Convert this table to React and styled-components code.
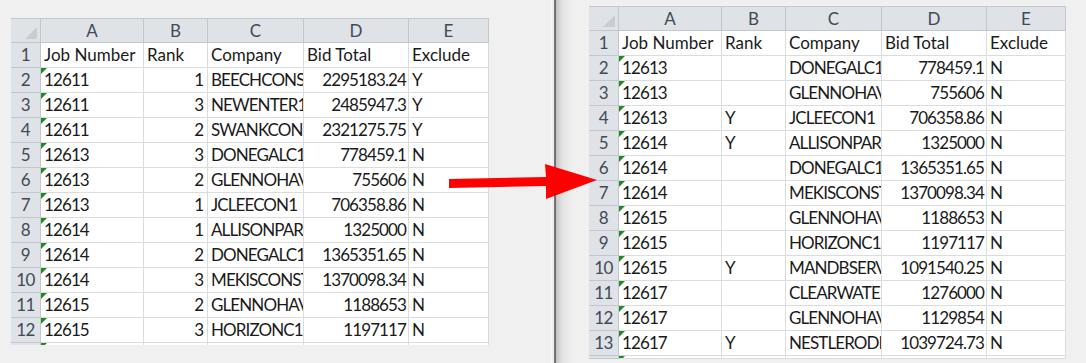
import React from 'react'
import styled, { createGlobalStyle } from 'styled-components'

const GlobalStyle = createGlobalStyle`
  html, body {
    margin: 0;
    padding: 0;
    background: #f0f0f0;
  }
  body {
    width: 1086px;
    height: 363px;
    overflow: hidden;
    font-family: Lato, "Liberation Sans", sans-serif;
  }
`

const LETTERS = ['A', 'B', 'C', 'D', 'E']

const leftRows = [
  ['Job Number', 'Rank', 'Company', 'Bid Total', 'Exclude'],
  ['12611', '1', 'BEECHCONS', '2295183.24', 'Y'],
  ['12611', '3', 'NEWENTER1', '2485947.3', 'Y'],
  ['12611', '2', 'SWANKCON', '2321275.75', 'Y'],
  ['12613', '3', 'DONEGALC1', '778459.1', 'N'],
  ['12613', '2', 'GLENNOHAV', '755606', 'N'],
  ['12613', '1', 'JCLEECON1', '706358.86', 'N'],
  ['12614', '1', 'ALLISONPAR', '1325000', 'N'],
  ['12614', '2', 'DONEGALC1', '1365351.65', 'N'],
  ['12614', '3', 'MEKISCONST', '1370098.34', 'N'],
  ['12615', '2', 'GLENNOHAV', '1188653', 'N'],
  ['12615', '3', 'HORIZONC1', '1197117', 'N'],
]

const rightRows = [
  ['Job Number', 'Rank', 'Company', 'Bid Total', 'Exclude'],
  ['12613', '', 'DONEGALC1', '778459.1', 'N'],
  ['12613', '', 'GLENNOHAV', '755606', 'N'],
  ['12613', 'Y', 'JCLEECON1', '706358.86', 'N'],
  ['12614', 'Y', 'ALLISONPAR', '1325000', 'N'],
  ['12614', '', 'DONEGALC1', '1365351.65', 'N'],
  ['12614', '', 'MEKISCONST', '1370098.34', 'N'],
  ['12615', '', 'GLENNOHAV', '1188653', 'N'],
  ['12615', '', 'HORIZONC1', '1197117', 'N'],
  ['12615', 'Y', 'MANDBSERV', '1091540.25', 'N'],
  ['12617', '', 'CLEARWATE', '1276000', 'N'],
  ['12617', '', 'GLENNOHAV', '1129854', 'N'],
  ['12617', 'Y', 'NESTLERODE', '1039724.73', 'N'],
]

// caps and digits run wider in Lato than in the sheet's font
const isTight = v => /^[A-Z0-9.]{2,}$/.test(v)

function Sheet({ rows, cols, align, tail }) {
  return (
    <Grid $cols={cols} $rows={rows.length} $tail={tail}>
      <Corner />
      {LETTERS.map(l => <ColHead key={l}>{l}</ColHead>)}
      {rows.map((row, i) => (
        <React.Fragment key={i}>
          <RowHead>{i + 1}</RowHead>
          {row.map((v, j) => (
            <Cell key={j} $right={i > 0 && align[j] === 'r'} $flag={i > 0 && j === 0} $tight={isTight(v)}>
              {v}
            </Cell>
          ))}
        </React.Fragment>
      ))}
      <RowHead />
      {LETTERS.map((l, j) => <Cell key={l} $flag={j === 0} />)}
    </Grid>
  )
}

export default function App() {
  return (
    <Page>
      <GlobalStyle />
      <LeftPane>
        <Sheet rows={leftRows} cols={[30, 103, 64, 96, 105, 80]} align={['l', 'r', 'l', 'r', 'l']} tail={2} />
      </LeftPane>
      <Divider />
      <RightPane>
        <Sheet rows={rightRows} cols={[30, 103, 64, 96, 105, 79]} align={['l', 'l', 'l', 'r', 'l']} tail={3} />
      </RightPane>
      <Arrow viewBox="0 0 160 50" width="160" height="50">
        <polygon points="9,24 106,22 105,9 157,25 106,44 106,31 9,33" fill="#f00" />
      </Arrow>
    </Page>
  )
}

const Page = styled.div`
position:relative;
display:flex;
width:1086px;
height:363px;
overflow:hidden;
background:#f0f0f0;
`

const LeftPane = styled.div`
width:552px;
padding:18px 0 0 11px;
box-sizing:border-box;
border-right:1px solid #fafafa;
`

const Divider = styled.div`
width:4px;
background:linear-gradient(to right, #f0f0f0 0, #f0f0f0 2px, #7a7a7a 2px, #6a6a6a 4px);
`

const RightPane = styled.div`
flex:1;
padding:6px 0 0 33px;
background:linear-gradient(to right, #c4c4c4 0, #e2e2e2 6px, #f0f0f0 16px);
`

const Grid = styled.div`
display:grid;
grid-template-columns:${p => p.$cols.map(c => c + 'px').join(' ')};
grid-template-rows:repeat(${p => p.$rows + 1}, 25px) ${p => p.$tail}px;
overflow:hidden;
background:#fff;
width:max-content;
`

const Corner = styled.div`
position:relative;
background:#dfe3e8;
border-top:1px solid #c3c7cc;
border-right:1px solid #c3c7cc;
border-bottom:1px solid #c3c7cc;
box-sizing:border-box;
&::after{
  content:'';
  position:absolute;
  right:3px;
  bottom:3px;
  width:12px;
  height:12px;
  background:#c9ccd0;
  clip-path:polygon(100% 0, 100% 100%, 0 100%);
}
`

const ColHead = styled.div`
background:#dfe3e8;
border-top:1px solid #c3c7cc;
border-right:1px solid #c3c7cc;
border-bottom:1px solid #c3c7cc;
box-sizing:border-box;
display:flex;
align-items:center;
justify-content:center;
font-size:17px;
color:#3f4a55;
`

const RowHead = styled.div`
background:#dfe3e8;
border-right:1px solid #c3c7cc;
border-bottom:1px solid #c3c7cc;
box-sizing:border-box;
display:flex;
align-items:flex-end;
justify-content:center;
padding-bottom:2px;
font-size:17px;
line-height:20px;
letter-spacing:-0.5px;
color:#3f4a55;
overflow:hidden;
`

const Cell = styled.div`
position:relative;
border-right:1px solid #dadcdd;
border-bottom:1px solid #dadcdd;
box-sizing:border-box;
display:flex;
align-items:flex-end;
justify-content:${p => p.$right ? 'flex-end' : 'flex-start'};
padding:0 ${p => p.$right && p.$tight ? '2px' : '3px'} 2px 3px;
font-size:17px;
line-height:20px;
letter-spacing:${p => p.$tight ? '-0.9px' : '0'};
color:#1a1a1a;
white-space:nowrap;
overflow:hidden;
&::before{
  content:'';
  display:${p => p.$flag ? 'block' : 'none'};
  position:absolute;
  left:0;
  top:0;
  width:6px;
  height:6px;
  background:#1f8a1f;
  clip-path:polygon(0 0, 100% 0, 0 100%);
}
`

const Arrow = styled.svg`
position:absolute;
left:440px;
top:155px;
`
